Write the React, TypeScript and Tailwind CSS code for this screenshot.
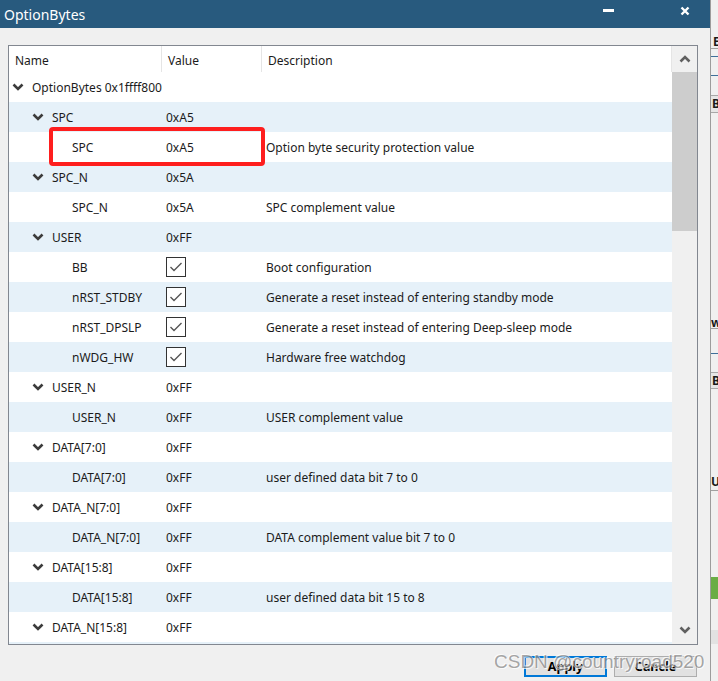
import React from 'react';

type Row = {
  level: 0 | 1 | 2;
  name: string;
  value?: string;
  desc?: string;
  check?: boolean;
  open?: boolean;
};

const rows: Row[] = [
  { level: 0, name: 'OptionBytes 0x1ffff800', open: true },
  { level: 1, name: 'SPC', value: '0xA5', open: true },
  { level: 2, name: 'SPC', value: '0xA5', desc: 'Option byte security protection value' },
  { level: 1, name: 'SPC_N', value: '0x5A', open: true },
  { level: 2, name: 'SPC_N', value: '0x5A', desc: 'SPC complement value' },
  { level: 1, name: 'USER', value: '0xFF', open: true },
  { level: 2, name: 'BB', check: true, desc: 'Boot configuration' },
  { level: 2, name: 'nRST_STDBY', check: true, desc: 'Generate a reset instead of entering standby mode' },
  { level: 2, name: 'nRST_DPSLP', check: true, desc: 'Generate a reset instead of entering Deep-sleep mode' },
  { level: 2, name: 'nWDG_HW', check: true, desc: 'Hardware free watchdog' },
  { level: 1, name: 'USER_N', value: '0xFF', open: true },
  { level: 2, name: 'USER_N', value: '0xFF', desc: 'USER complement value' },
  { level: 1, name: 'DATA[7:0]', value: '0xFF', open: true },
  { level: 2, name: 'DATA[7:0]', value: '0xFF', desc: 'user defined data bit 7 to 0' },
  { level: 1, name: 'DATA_N[7:0]', value: '0xFF', open: true },
  { level: 2, name: 'DATA_N[7:0]', value: '0xFF', desc: 'DATA complement value bit 7 to 0' },
  { level: 1, name: 'DATA[15:8]', value: '0xFF', open: true },
  { level: 2, name: 'DATA[15:8]', value: '0xFF', desc: 'user defined data bit 15 to 8' },
  { level: 1, name: 'DATA_N[15:8]', value: '0xFF', open: true },
  { level: 2, name: 'DATA_N[15:8]', value: '0xFF', desc: 'DATA complement value bit 15 to 8' },
];

const indent = ['pl-[3px]', 'pl-[23px]', 'pl-[43px]'];

const Chevron = ({ up = false }: { up?: boolean }) => (
  <svg width="12" height="8" viewBox="0 0 12 8" className="shrink-0">
    <polyline
      points={up ? '1.5,6.5 6,2 10.5,6.5' : '1.5,1.5 6,6 10.5,1.5'}
      fill="none"
      stroke={up ? '#606060' : '#3c3c3c'}
      strokeWidth="2.6"
    />
  </svg>
);

const CheckBox = () => (
  <div className="w-[20px] h-[20px] border border-[#333] bg-white flex items-center justify-center">
    <svg width="16" height="16" viewBox="0 0 16 16">
      <polyline points="2.5,8 6,11.5 13.5,4" fill="none" stroke="#555" strokeWidth="1.4" />
    </svg>
  </div>
);

const SideStrip = () => (
  <div className="flex-1 h-full bg-[#f0f0f0] border-l border-[#9c9c9c] overflow-hidden flex flex-col text-[12px] font-bold text-[#1a1a1a] font-['Noto_Sans',sans-serif] whitespace-nowrap">
    <div className="h-[35px] shrink-0" />
    <div className="h-[14px] leading-[14px] pl-[2px] border-b border-[#a0a0a0] shrink-0">En</div>
    <div className="mt-[7px] h-px bg-[#3f6f99] shrink-0" />
    <div className="mt-[18px] h-px bg-[#3f6f99] shrink-0" />
    <div className="mt-[19px] h-[18px] leading-[16px] pl-[1px] border-y border-[#a8a8a8] bg-[#e6e6e6] shrink-0">Br</div>
    <div className="h-[204px] shrink-0" />
    <div className="h-[12px] leading-[12px] border-b border-[#a0a0a0] shrink-0">w</div>
    <div className="mt-[24px] h-px bg-[#3f6f99] shrink-0" />
    <div className="mt-[18px] h-[17px] leading-[15px] pl-[1px] border-y border-[#a8a8a8] bg-[#e6e6e6] shrink-0">Br</div>
    <div className="h-[84px] shrink-0" />
    <div className="h-[18px] leading-[18px] border-b border-[#a0a0a0] shrink-0">Up</div>
    <div className="h-[86px] shrink-0" />
    <div className="h-[22px] bg-[#6aad45] shrink-0" />
    <div className="h-[31px] shrink-0" />
    <div className="h-[14px] bg-[#e2e2e2] shrink-0" />
  </div>
);

export default function App() {
  return (
    <div className="relative w-[718px] h-[681px] overflow-hidden flex bg-[#f0f0f0] font-['Noto_Sans',sans-serif] text-[#1b1b1b]">
      <div className="w-[710px] h-full flex flex-col shrink-0">
        {/* title bar */}
        <div className="h-[28px] bg-[#285a7e] flex items-start shrink-0">
          <div className="flex-1 pl-[4px] pt-[1px] leading-[28px] text-[14px] text-white">OptionBytes</div>
          <div className="mt-[9px] w-[11px] h-[3px] bg-white" />
          <svg width="10" height="10" viewBox="0 0 10 10" className="mt-[6px] ml-[66px] mr-[20px]">
            <path d="M1.5 1.5 L8.5 8.5 M8.5 1.5 L1.5 8.5" stroke="white" strokeWidth="2.4" />
          </svg>
        </div>

        {/* body */}
        <div className="flex-1 flex flex-col pt-[17px] pl-[8px] pr-[12px]">
          <div className="h-[600px] border border-[#828790] bg-white flex overflow-hidden">
            <div className="flex-1 flex flex-col overflow-hidden text-[12px]">
              <div className="h-[26px] flex items-center shrink-0 bg-white">
                <div className="w-[153px] h-full pl-[6px] pt-[3px] flex items-center border-r border-[#e5e5e5]">Name</div>
                <div className="w-[100px] h-full pl-[6px] pt-[3px] flex items-center border-r border-[#e5e5e5]">Value</div>
                <div className="flex-1 h-full pl-[6px] pt-[3px] flex items-center border-r border-[#e5e5e5]">Description</div>
              </div>
              {rows.map((r, i) => (
                <div
                  key={i}
                  className={`h-[30px] shrink-0 flex items-center ${i % 2 === 1 ? 'bg-[#e6f1f9]' : 'bg-white'}`}
                >
                  <div className={`w-[153px] flex items-center whitespace-nowrap ${indent[r.level]}`}>
                    <div className="w-[20px] shrink-0 flex items-center">{r.open && <Chevron />}</div>
                    <span className="pt-[2px]">{r.name}</span>
                  </div>
                  <div className="w-[100px] pl-[4px] flex items-center">
                    {r.check ? <CheckBox /> : <span className="pt-[2px]">{r.value}</span>}
                  </div>
                  <div className="flex-1 pl-[4px] pt-[2px] whitespace-nowrap">{r.desc}</div>
                </div>
              ))}
            </div>

            {/* scrollbar */}
            <div className="w-[25px] bg-[#f0f0f0] flex flex-col shrink-0">
              <div className="h-[26px] flex items-center justify-center">
                <Chevron up />
              </div>
              <div className="h-[159px] bg-[#cdcdcd]" />
              <div className="flex-1" />
              <div className="h-[26px] flex items-center justify-center pb-[2px]">
                <svg width="12" height="8" viewBox="0 0 12 8">
                  <polyline points="1.5,1.5 6,6 10.5,1.5" fill="none" stroke="#606060" strokeWidth="2.6" />
                </svg>
              </div>
            </div>
          </div>

          <div className="mt-[11px] flex justify-end gap-[7px] pr-[1px]">
            <button className="w-[83px] h-[21px] border-2 border-[#0078d7] bg-[#e1e1e1] text-[12.5px] font-bold text-black leading-none pt-[2px]">
              Apply
            </button>
            <button className="w-[83px] h-[21px] border border-[#adadad] bg-[#e1e1e1] text-[12.5px] font-bold text-black leading-none pt-[2px]">
              Cancle
            </button>
          </div>
        </div>
      </div>

      <SideStrip />

      {/* highlight box */}
      <div className="absolute left-[49px] top-[127px] w-[216px] h-[39px] border-[4px] border-[#fe1e1e] rounded-[4px] pointer-events-none" />

      {/* watermark */}
      <div className="absolute left-[494px] top-[652px] text-[19px] leading-none font-['Liberation_Sans',sans-serif] text-[#8c8c8c] opacity-75 [text-shadow:0_0_1px_#fff,1px_1px_0_#fff,-1px_-1px_0_#fff] whitespace-nowrap pointer-events-none">
        CSDN @countryroad520
      </div>
    </div>
  );
}
